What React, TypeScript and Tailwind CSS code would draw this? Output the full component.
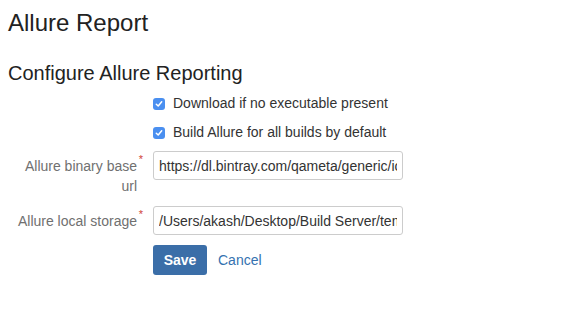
import { useState } from "react";

function Check({ checked, label }: { checked: boolean; label: string }) {
  return (
    <label className="flex items-center h-5 cursor-pointer">
      <span className="w-[12px] h-[12px] mt-[2px] rounded-[3px] bg-[#4a8ff0] flex items-center justify-center shrink-0">
        {checked && (
          <svg width="8" height="8" viewBox="0 0 8 8">
            <path d="M1.3 4.2 L3.2 6 L6.7 1.8" stroke="#fff" strokeWidth="1.5" fill="none" strokeLinecap="round" strokeLinejoin="round" />
          </svg>
        )}
      </span>
      <span className="ml-[8px] text-[#333]">{label}</span>
    </label>
  );
}

function Field({ label, value }: { label: string; value: string }) {
  return (
    <div className="flex items-start">
      <div className="w-[153px] shrink-0 flex justify-end pr-[16px]">
        <label className="relative w-[124px] text-right text-[#707070] pt-[5px] leading-5">
          {label}
          <span className="absolute -right-[6px] top-[3px] text-[#d04437] text-[11px] leading-none">*</span>
        </label>
      </div>
      <input
        readOnly
        value={value}
        className="w-[250px] h-[29px] px-[5px] border border-[#ccc] rounded-[3px] bg-white text-[#333] text-[14px] outline-none"
        style={{ fontFamily: "inherit" }}
      />
    </div>
  );
}

export default function App() {
  const [saved] = useState(false);
  return (
    <div className="w-[568px] h-[323px] bg-white text-[14px] leading-5" style={{ fontFamily: '"Liberation Sans", Arial, sans-serif' }}>
      <div className="pl-[8px] pt-[9px]">
        <h1 className="text-[24px] leading-[28px] text-[#222]">Allure Report</h1>
        <h2 className="mt-[24px] text-[20px] leading-6 text-[#222]">Configure Allure Reporting</h2>
      </div>
      <div className="mt-[8px] pl-[153px] flex flex-col gap-[9px]">
        <Check checked label="Download if no executable present" />
        <Check checked label="Build Allure for all builds by default" />
      </div>
      <div className="mt-[9px] flex flex-col gap-[10px]">
        <Field label="Allure binary base url" value="https://dl.bintray.com/qameta/generic/io/qameta/allure/allure" />
        <Field label="Allure local storage" value="/Users/akash/Desktop/Build Server/temp" />
      </div>
      <div className="mt-[10px] pl-[153px] flex items-center">
        <button className="w-[54px] h-[30px] rounded-[3px] bg-[#3b6ea8] text-white font-bold">{saved ? "Saved" : "Save"}</button>
        <a className="ml-[11px] text-[#3572b0]">Cancel</a>
      </div>
    </div>
  );
}
